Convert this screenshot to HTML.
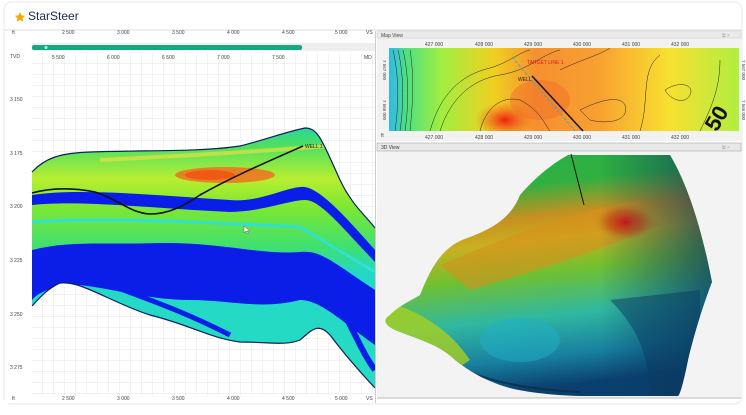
<!DOCTYPE html>
<html><head><meta charset="utf-8"><style>
html,body{margin:0;padding:0;background:#fff;}
body{width:746px;height:410px;overflow:hidden;font-family:"Liberation Sans",sans-serif;}
</style></head><body>
<svg width="746" height="410" viewBox="0 0 746 410" xmlns="http://www.w3.org/2000/svg" font-family="Liberation Sans, sans-serif">
<defs>
<pattern id="grid" width="11" height="11" patternUnits="userSpaceOnUse" x="32" y="53">
<path d="M11 0V11M0 11H11" stroke="#e6e6e6" stroke-width="1" fill="none"/></pattern>
<linearGradient id="seis" x1="0" y1="0" x2="0" y2="1">
<stop offset="0" stop-color="#22d4a0"/><stop offset="0.08" stop-color="#50e060"/>
<stop offset="0.2" stop-color="#b8ee30"/><stop offset="0.3" stop-color="#7ee830"/>
<stop offset="0.45" stop-color="#40e070"/><stop offset="0.55" stop-color="#22d8c8"/>
<stop offset="1" stop-color="#28dcc0"/></linearGradient>
<linearGradient id="map" x1="0" y1="0" x2="1" y2="0">
<stop offset="0" stop-color="#30b8f0"/><stop offset="0.05" stop-color="#50e080"/>
<stop offset="0.15" stop-color="#a0ee40"/><stop offset="0.3" stop-color="#f0d020"/>
<stop offset="0.42" stop-color="#f59030"/><stop offset="0.6" stop-color="#f8a030"/>
<stop offset="0.8" stop-color="#f8e030"/><stop offset="1" stop-color="#b0ee40"/></linearGradient>
<radialGradient id="hot" cx="0.5" cy="0.5" r="0.5"><stop offset="0" stop-color="#f02010"/><stop offset="1" stop-color="#f06020" stop-opacity="0"/></radialGradient>
<linearGradient id="terr" x1="0" y1="0" x2="0.15" y2="1">
<stop offset="0" stop-color="#28b048"/><stop offset="0.2" stop-color="#30b040"/>
<stop offset="0.33" stop-color="#c89020"/><stop offset="0.42" stop-color="#c8b020"/>
<stop offset="0.55" stop-color="#70c030"/><stop offset="0.72" stop-color="#30b8a0"/>
<stop offset="0.88" stop-color="#1880a0"/><stop offset="1" stop-color="#0a4070"/></linearGradient>
<radialGradient id="peak" cx="0.5" cy="0.5" r="0.5"><stop offset="0" stop-color="#e81010"/><stop offset="0.6" stop-color="#d05010" stop-opacity="0.7"/><stop offset="1" stop-color="#c08020" stop-opacity="0"/></radialGradient>
<linearGradient id="dark" x1="0" y1="0" x2="1" y2="0"><stop offset="0" stop-color="#0a3a60" stop-opacity="0"/><stop offset="1" stop-color="#0a3a60" stop-opacity="0.8"/></linearGradient>
<clipPath id="sc"><path d="M32 172 C45 158 60 153 90 152 C150 150 200 152 240 146 C265 140 285 132 305 128 C318 128 322 140 340 180 C352 205 365 215 375 228 L375 388 C360 372 345 355 330 335 C318 322 312 330 300 340 C285 346 270 342 240 342 C210 338 190 325 150 315 C110 302 80 280 60 283 C45 290 38 300 32 306 Z"/></clipPath>
<clipPath id="mc"><rect x="389" y="48" width="350" height="83"/></clipPath>
<clipPath id="tc"><path d="M568 155 L670 155 C685 180 700 220 712 282 C705 300 695 330 688 360 C684 380 680 395 678 396 L580 396 C550 395 520 392 500 385 C480 378 465 368 455 360 C440 345 420 340 395 330 C385 325 382 320 390 315 C400 305 412 300 420 295 C430 270 440 250 462 240 C490 230 510 220 520 195 C535 178 550 165 568 155Z"/></clipPath>
</defs>
<rect x="0" y="0" width="746" height="410" fill="#fff"/>
<rect x="4" y="2" width="738" height="402" rx="8" fill="#fff" stroke="#e8e8e8"/>
<path d="M20 12l1.6 3.4 3.6.4-2.7 2.4.8 3.6-3.3-1.9-3.3 1.9.8-3.6-2.7-2.4 3.6-.4z" fill="#f5a800"/>
<text x="28" y="20" font-size="12" fill="#1a2a4a">StarSteer</text>
<line x1="4" y1="30" x2="742" y2="30" stroke="#ddd"/>
<rect x="5" y="31" width="370" height="372" fill="#fff"/>
<rect x="32" y="53" width="343" height="342" fill="url(#grid)"/>
<g font-size="5" fill="#444">
<text x="12" y="34">ft</text><text x="62" y="34">2 500</text><text x="117" y="34">3 000</text><text x="172" y="34">3 500</text><text x="227" y="34">4 000</text><text x="282" y="34">4 500</text><text x="335" y="34">5 000</text><text x="366" y="34">VS</text>
<text x="10" y="58">TVD</text><text x="52" y="59">5 500</text><text x="107" y="59">6 000</text><text x="162" y="59">6 500</text><text x="217" y="59">7 000</text><text x="272" y="59">7 500</text><text x="364" y="59">MD</text>
<text x="10" y="101">3 150</text><text x="10" y="155">3 175</text><text x="10" y="208">3 200</text><text x="10" y="262">3 225</text><text x="10" y="316">3 250</text><text x="10" y="369">3 275</text>
<text x="12" y="400">ft</text><text x="62" y="400">2 500</text><text x="117" y="400">3 000</text><text x="172" y="400">3 500</text><text x="227" y="400">4 000</text><text x="282" y="400">4 500</text><text x="335" y="400">5 000</text><text x="366" y="400">VS</text>
</g>
<rect x="32" y="43" width="343" height="8" fill="#eee"/>
<rect x="32" y="45" width="270" height="5" rx="2" fill="#15a882"/>
<circle cx="46" cy="47.5" r="1.5" fill="#9fe" />
<g clip-path="url(#sc)">
<rect x="30" y="125" width="350" height="270" fill="url(#seis)"/>
<path d="M32 195 C80 188 150 195 230 200 C260 203 290 185 305 187 C320 190 340 210 375 250 L375 262 C340 225 320 200 305 200 C290 200 260 212 230 212 C150 208 80 200 32 205Z" fill="#0a1ee8"/>
<path d="M32 250 C70 240 110 245 160 243 C220 242 260 255 300 252 C320 250 330 260 375 290 L375 345 C340 320 320 300 300 300 C260 310 230 300 190 300 C150 300 120 290 80 285 C60 285 40 290 32 300Z" fill="#0a1ee8"/>
<path d="M32 222 C100 217 200 222 300 227 L375 272" stroke="#30e0d0" stroke-width="3" fill="none"/>
<path d="M110 285 C150 300 180 310 230 335" stroke="#0a1ee8" stroke-width="5" fill="none"/>
<path d="M330 290 C350 320 360 350 375 370" stroke="#0a1ee8" stroke-width="6" fill="none"/>
<ellipse cx="225" cy="175" rx="50" ry="8" fill="#f07020" opacity="0.85"/>
<ellipse cx="210" cy="175" rx="25" ry="5" fill="#f05010" opacity="0.8"/>
<path d="M100 160 C200 155 280 150 340 145" stroke="#f8e040" stroke-width="4" fill="none" opacity="0.6"/>
</g>
<path d="M32 172 C45 158 60 153 90 152 C150 150 200 152 240 146 C265 140 285 132 305 128 C318 128 322 140 340 180 C352 205 365 215 375 228 M375 388 C360 372 345 355 330 335 C318 322 312 330 300 340 C285 346 270 342 240 342 C210 338 190 325 150 315 C110 302 80 280 60 283 C45 290 38 300 32 306" stroke="#0a2060" stroke-width="1.2" fill="none"/>
<path d="M32 193 C50 188 70 187 95 192 C120 200 130 213 150 214 C170 214 185 205 200 195 C230 178 260 165 303 146" stroke="#111" stroke-width="1.6" fill="none"/>
<text x="305" y="148" font-size="5" fill="#222">WELL 1</text>
<path d="M244 226l0 7 2-2 2 3 1-1-2-2 3 0z" fill="#fff" stroke="#555" stroke-width="0.5"/>
<line x1="375.5" y1="31" x2="375.5" y2="403" stroke="#ccc"/>
<rect x="377" y="31" width="364" height="110" fill="#f2f2f2"/>
<rect x="377" y="31" width="364" height="7" fill="#eaeaea" stroke="#ccc" stroke-width="0.5"/>
<text x="381" y="37" font-size="5" fill="#444">Map View</text>
<text x="722" y="37" font-size="5" fill="#aaa">⧉ ×</text>
<g font-size="5" fill="#444">
<text x="425" y="46">427 000</text><text x="475" y="46">428 000</text><text x="524" y="46">429 000</text><text x="573" y="46">430 000</text><text x="622" y="46">431 000</text><text x="671" y="46">432 000</text>
<text x="425" y="139">427 000</text><text x="475" y="139">428 000</text><text x="524" y="139">429 000</text><text x="573" y="139">430 000</text><text x="622" y="139">431 000</text><text x="671" y="139">432 000</text>
<text x="381" y="137">ft</text>
</g>
<g clip-path="url(#mc)">
<rect x="389" y="48" width="350" height="83" fill="url(#map)"/>
<ellipse cx="505" cy="120" rx="30" ry="18" fill="url(#hot)"/>
<ellipse cx="540" cy="100" rx="30" ry="20" fill="#f27028" opacity="0.5"/>
<path d="M393 50 C400 80 398 110 395 131 M398 50 C405 80 403 110 400 131 M403 50 C410 80 408 110 405 131 M410 50 C415 80 412 110 410 131" stroke="#223" stroke-width="0.5" fill="none"/>
<path d="M440 131 C450 100 470 80 500 75 C530 70 540 55 560 50" stroke="#222" stroke-width="0.5" fill="none"/>
<path d="M430 131 C440 95 460 75 490 68 C510 62 520 52 530 50" stroke="#222" stroke-width="0.5" fill="none"/>
<path d="M480 131 C485 110 500 95 520 100 C540 110 545 125 550 131" stroke="#222" stroke-width="0.5" fill="none"/>
<path d="M580 110 C600 100 620 95 625 105 C630 120 610 125 590 120Z" stroke="#222" stroke-width="0.5" fill="none"/>
<path d="M665 90 C680 80 695 85 690 95 C685 105 670 100 665 90Z" stroke="#222" stroke-width="0.5" fill="none"/>
<path d="M640 131 C650 100 640 70 660 55" stroke="#222" stroke-width="0.5" fill="none"/>
<path d="M700 131 C710 110 720 90 720 60" stroke="#222" stroke-width="0.5" fill="none"/>
<path d="M560 70 C580 60 600 55 610 48" stroke="#222" stroke-width="0.5" fill="none"/>
<text x="705" y="128" font-size="22" font-weight="bold" fill="#111" transform="rotate(-60 715 120)">50</text>
</g>
<line x1="512" y1="57" x2="575" y2="131" stroke="#4aa" stroke-width="1" stroke-dasharray="3 2"/>
<line x1="532" y1="76" x2="583" y2="131" stroke="#111" stroke-width="1.5"/>
<text x="527" y="64" font-size="5" fill="#d02020">TARGET LINE 1</text>
<text x="518" y="81" font-size="5" fill="#222">WELL</text>
<text x="383" y="60" font-size="4.5" fill="#444" transform="rotate(90 383 60)">7 567 000</text>
<text x="383" y="100" font-size="4.5" fill="#444" transform="rotate(90 383 100)">7 566 000</text>
<text x="742" y="60" font-size="4.5" fill="#444" transform="rotate(90 742 60)">7 567 000</text>
<text x="742" y="100" font-size="4.5" fill="#444" transform="rotate(90 742 100)">7 566 000</text>
<rect x="377" y="143" width="364" height="255" fill="#f3f3f3"/>
<rect x="377" y="143" width="364" height="8" fill="#e8e8e8" stroke="#999" stroke-width="0.5"/>
<text x="381" y="149" font-size="5" fill="#333">3D View</text>
<text x="722" y="149" font-size="5" fill="#aaa">⧉ ×</text>
<g clip-path="url(#tc)">
<rect x="380" y="150" width="340" height="250" fill="url(#terr)"/>
<path d="M440 265 C500 240 560 215 640 200 L660 225 C600 250 540 270 470 290Z" fill="#d8901c" opacity="0.6"/>
<ellipse cx="625" cy="222" rx="30" ry="18" fill="url(#peak)"/>
<rect x="600" y="150" width="120" height="250" fill="url(#dark)"/>
<path d="M380 300 C420 310 450 330 470 360 L455 370 C430 345 400 335 380 330Z" fill="#a8d020" opacity="0.8"/>
<path d="M610 300 C640 330 650 360 650 400 L700 400 L700 290Z" fill="#0a3a60" opacity="0.5"/>
<ellipse cx="520" cy="340" rx="40" ry="22" fill="#20b0c8" opacity="0.5"/>
<path d="M470 372 C500 385 540 390 580 392" stroke="#0a2a40" stroke-width="2" fill="none" opacity="0.7"/>
</g>
<line x1="571" y1="154" x2="584" y2="205" stroke="#111" stroke-width="1"/>
<line x1="377" y1="398" x2="741" y2="398" stroke="#bbb"/>
</svg>
</body></html>
